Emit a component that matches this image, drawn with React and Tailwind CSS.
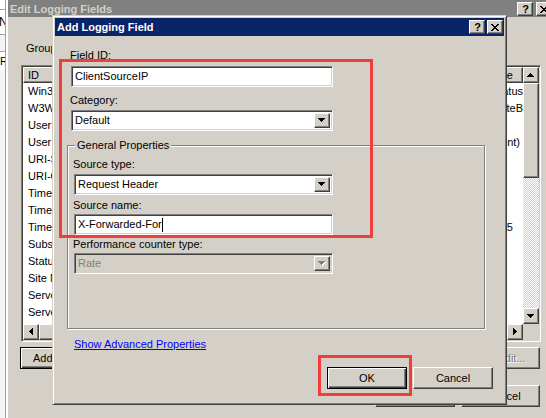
import React from "react";

const F = "font-['Liberation_Sans',Arial,sans-serif]";
const raised =
  "bg-[#d4d0c8] border border-t-white border-l-white border-r-[#404040] border-b-[#404040] shadow-[inset_-1px_-1px_0_#808080]";
const sunken =
  "border border-t-[#808080] border-l-[#808080] border-r-white border-b-white shadow-[inset_1px_1px_0_#404040,inset_-1px_-1px_0_#d4d0c8]";
const defBtn =
  "bg-[#d4d0c8] border border-black shadow-[inset_1px_1px_0_#fff,inset_-1px_-1px_0_#404040,inset_-2px_-2px_0_#808080]";
const checker =
  "bg-[repeating-conic-gradient(#ffffff_0_25%,#d4d0c8_0_50%)] bg-[length:2px_2px]";

function Tri({ dir = "down", color = "#000", disabled = false }) {
  const rows = [
    [0, 7],
    [1, 5],
    [2, 3],
    [3, 1],
  ];
  const vert = dir === "down" || dir === "up";
  const draw = (fill, o) =>
    rows.map(([i, w]) =>
      vert ? (
        <rect key={fill + i} x={i + o} y={(dir === "down" ? i : 3 - i) + o} width={w} height="1" fill={fill} />
      ) : (
        <rect key={fill + i} y={i + o} x={(dir === "right" ? i : 3 - i) + o} height={w} width="1" fill={fill} />
      )
    );
  const W = vert ? 8 : 5;
  const H = vert ? 5 : 8;
  return (
    <svg width={W} height={H} viewBox={`0 0 ${W} ${H}`} shapeRendering="crispEdges" className="block">
      {disabled && draw("#ffffff", 1)}
      {draw(disabled ? "#808080" : color, 0)}
    </svg>
  );
}

function XGlyph() {
  const r = [0, 1, 2, 3, 4, 5, 6];
  return (
    <svg width="8" height="7" viewBox="0 0 8 7" shapeRendering="crispEdges" className="block">
      {r.map((i) => (
        <React.Fragment key={i}>
          <rect x={i} y={i} width="2" height="1" fill="#000" />
          <rect x={6 - i} y={i} width="2" height="1" fill="#000" />
        </React.Fragment>
      ))}
    </svg>
  );
}

function TitleButtons({ gap }) {
  return (
    <div className={`flex ${gap}`}>
      <div className={`${raised} w-[16px] h-[14px] flex items-center justify-center`}>
        <span className="font-bold text-[11px] leading-[11px] text-black pl-[1px]">?</span>
      </div>
      <div className={`${raised} w-[16px] h-[14px] flex items-center justify-center`}>
        <XGlyph />
      </div>
    </div>
  );
}

function TextBox({ w, children, caret }) {
  return (
    <div className={`${sunken} ${w} h-[21px] bg-white flex items-center pl-[3px] whitespace-nowrap`}>
      <span>{children}</span>
      {caret && <span className="w-px h-[14px] bg-black" />}
    </div>
  );
}

function Combo({ w, children, disabled }) {
  return (
    <div
      className={`${sunken} ${w} h-[21px] ${disabled ? "bg-[#d4d0c8] text-[#808080]" : "bg-white"} p-[2px] flex items-stretch`}
    >
      <div className="flex-1 flex items-center pl-[1px] whitespace-nowrap">{children}</div>
      <div className={`${raised} w-[16px] flex items-center justify-center`}>
        <Tri dir="down" disabled={disabled} />
      </div>
    </div>
  );
}

function LeftStrip() {
  return (
    <div className="shrink-0 w-[6px] h-full bg-[#f4f4f4] border-r border-[#a0a0a0] flex flex-col overflow-hidden">
      <div className="h-[10px] bg-white border-b border-[#a0a0a0]" />
      <div className="h-[25px] bg-white border-b border-[#a0a0a0] flex items-center">
        <span className="ml-[-1px] w-[6px] overflow-hidden text-[12px] leading-[13px]">N</span>
      </div>
      <div className="h-[17px] border-b border-[#a0a0a0]" />
      <div className="h-[18px] bg-white flex items-center">
        <span className="w-[6px] overflow-hidden">R</span>
      </div>
    </div>
  );
}

const leftRows = [
  "Win32Status",
  "W3WPBytes",
  "UserName",
  "User Agent",
  "URI-Stem",
  "URI-Query",
  "Time-Taken",
  "Time-Local",
  "Time Stamp",
  "Substatus",
  "Status",
  "Site Name",
  "Server IP",
  "Server Name",
];
const rightRows = [
  { t: "Status", c: "pr-0" },
  { t: "WriteB", c: "pr-0" },
  { t: "", c: "pr-0" },
  { t: "(Agent)", c: "pr-[3px]" },
  { t: "", c: "pr-0" },
  { t: "", c: "pr-0" },
  { t: "", c: "pr-0" },
  { t: "", c: "pr-0" },
  { t: "15", c: "pr-[10px]" },
  { t: "", c: "pr-0" },
  { t: "", c: "pr-0" },
  { t: "", c: "pr-0" },
  { t: "", c: "pr-0" },
  { t: "", c: "pr-0" },
];

function ListView() {
  return (
    <div className={`ml-[13px] mt-[10px] w-[520px] h-[277px] bg-white ${sunken} p-[1px] flex flex-col`}>
      <div className="flex h-[257px]">
        <div className="w-[500px] flex flex-col overflow-hidden">
          <div className={`${raised} h-[16px] shrink-0 flex items-center justify-between`}>
            <span className="pl-[4px]">ID</span>
            <span className="pr-[9px]">Type</span>
          </div>
          {leftRows.map((l, i) => (
            <div key={i} className="h-[17px] shrink-0 flex items-center justify-between">
              <span className="pl-[5px] whitespace-nowrap">{l}</span>
              <span className={`whitespace-nowrap ${rightRows[i].c}`}>{rightRows[i].t}</span>
            </div>
          ))}
        </div>
        <div className="w-[16px] flex flex-col">
          <div className={`${raised} h-[16px] flex items-center justify-center`}>
            <Tri dir="up" />
          </div>
          <div className={`${raised} h-[95px]`} />
          <div className={`flex-1 ${checker}`} />
          <div className={`${raised} h-[16px] flex items-center justify-center`}>
            <Tri dir="down" />
          </div>
        </div>
      </div>
      <div className="flex h-[16px]">
        <div className="w-[500px] flex">
          <div className={`${raised} w-[16px] flex items-center justify-center`}>
            <Tri dir="left" />
          </div>
          <div className={`${raised} w-[160px]`} />
          <div className={`flex-1 ${checker}`} />
          <div className={`${raised} w-[16px] flex items-center justify-center`}>
            <Tri dir="right" />
          </div>
        </div>
        <div className="w-[16px] bg-[#d4d0c8]" />
      </div>
    </div>
  );
}

function BgWindow() {
  return (
    <div className="shrink-0 w-[550px] h-full border-l-[2px] border-white flex flex-col">
      <div className="h-[17px] shrink-0 bg-[#808080] flex items-start justify-between pl-[2px] pr-[4px]">
        <span className="pt-[3px] font-bold text-[#d4d0c8] whitespace-nowrap">Edit Logging Fields</span>
        <div className="pt-[2px]">
          <TitleButtons gap="gap-[3px]" />
        </div>
      </div>
      <div className="ml-[18px] mt-[25px] h-[13px] whitespace-nowrap">Group by:</div>
      <ListView />
      <div className="ml-[12px] mt-[5px] w-[520px] h-[22px] flex justify-between">
        <div className={`${defBtn} w-[75px] flex items-center justify-start pl-[12px]`}>Add...</div>
        <div
          className={`${raised} w-[79px] flex items-center justify-center pl-[22px] text-[#808080] [text-shadow:1px_1px_0_#fff]`}
        >
          Edit...
        </div>
      </div>
      <div className="ml-[12px] mt-[16px] w-[520px] h-[22px] flex justify-end gap-[6px]">
        <div className={`${raised} w-[80px] flex items-center justify-center`}>OK</div>
        <div className={`${raised} w-[79px] flex items-center justify-center pl-[6px]`}>Cancel</div>
      </div>
    </div>
  );
}

function Dialog() {
  return (
    <div className="absolute left-[52px] top-[15px] w-[455px] h-[390px] bg-[#d4d0c8] border border-t-[#d4d0c8] border-l-[#d4d0c8] border-r-[#404040] border-b-[#404040] shadow-[inset_1px_1px_0_#fff,inset_-1px_-1px_0_#808080] p-[2px] flex flex-col">
      <div className="h-[18px] shrink-0 bg-[#0a246a] flex items-center justify-between pl-[2px] pr-[1px]">
        <span className="font-bold text-white whitespace-nowrap">Add Logging Field</span>
        <TitleButtons gap="gap-[2px]" />
      </div>
      <div className="flex flex-col">
        <div className="ml-[15px] mt-[13px] h-[13px]">Field ID:</div>
        <div className="ml-[16px] mt-[4px]">
          <TextBox w="w-[262px]">ClientSourceIP</TextBox>
        </div>
        <div className="ml-[15px] mt-[7px] h-[13px]">Category:</div>
        <div className="ml-[16px] mt-[3px]">
          <Combo w="w-[262px]">Default</Combo>
        </div>
        <fieldset className="ml-[12px] mt-[8px] w-[418px] h-[190px] border border-[#808080] shadow-[inset_1px_1px_0_#fff,1px_1px_0_#fff] pl-[6px] pt-[6px]">
          <legend className="px-[2px] ml-[1px] bg-[#d4d0c8] leading-[13px]">General Properties</legend>
          <div className="ml-[-1px] h-[13px]">Source type:</div>
          <div className="mt-[3px]">
            <Combo w="w-[259px]">Request Header</Combo>
          </div>
          <div className="ml-[-1px] mt-[4px] h-[13px]">Source name:</div>
          <div className="mt-[2px]">
            <TextBox w="w-[259px]" caret>
              X-Forwarded-For
            </TextBox>
          </div>
          <div className="ml-[-1px] mt-[3px] h-[13px]">Performance counter type:</div>
          <div className="mt-[2px]">
            <Combo w="w-[259px]" disabled>
              Rate
            </Combo>
          </div>
        </fieldset>
        <div className="ml-[19px] mt-[9px] h-[13px]">
          <span className="text-[#0000ff] underline">Show Advanced Properties</span>
        </div>
        <div className="mt-[16px] h-[22px] flex justify-end gap-[6px] pr-[11px]">
          <div className={`${defBtn} w-[80px] flex items-center justify-center`}>OK</div>
          <div className={`${raised} w-[80px] flex items-center justify-center`}>Cancel</div>
        </div>
      </div>
    </div>
  );
}

export default function App() {
  return (
    <div
      className={`relative w-[546px] h-[418px] overflow-hidden bg-[#d4d0c8] text-[11px] leading-[13px] text-black flex ${F}`}
    >
      <LeftStrip />
      <BgWindow />
      <Dialog />
      <div className="absolute left-[59px] top-[59px] w-[314px] h-[179px] border-[3px] border-[#f23d3d]" />
      <div className="absolute left-[318px] top-[355px] w-[94px] h-[41px] border-[3px] border-[#f23d3d]" />
    </div>
  );
}
